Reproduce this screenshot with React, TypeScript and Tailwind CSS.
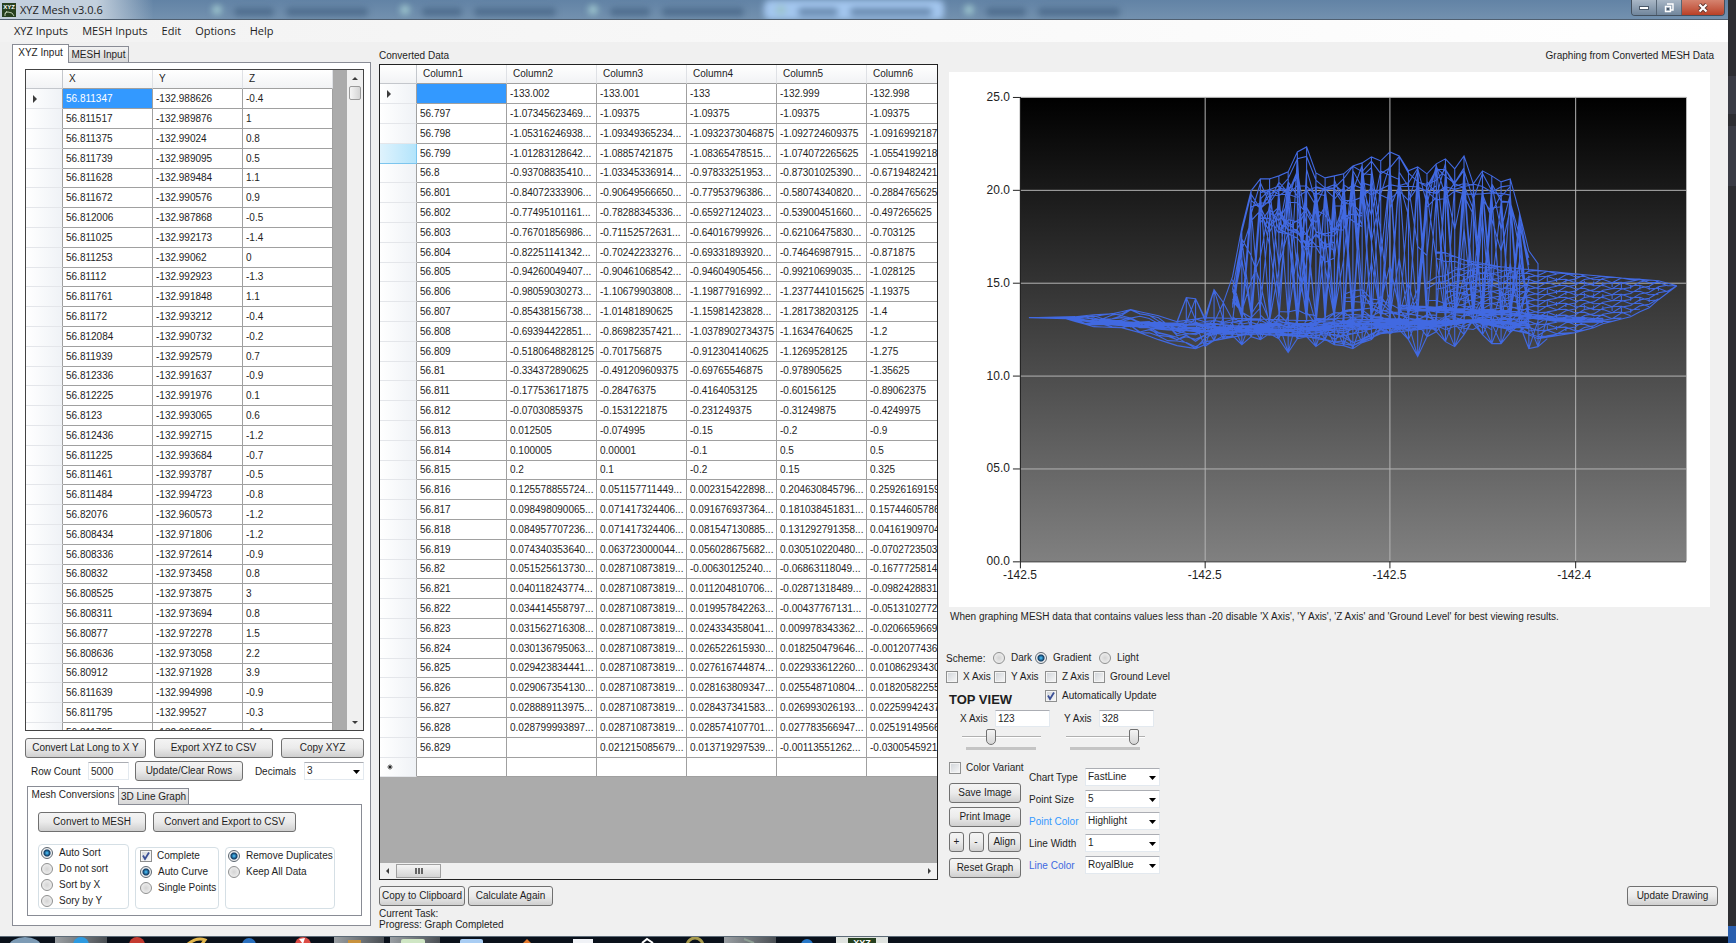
import React, { useState } from 'react';

const XYZ_ROWS = `56.811347 -132.988626 -0.4
56.811517 -132.989876 1
56.811375 -132.99024 0.8
56.811739 -132.989095 0.5
56.811628 -132.989484 1.1
56.811672 -132.990576 0.9
56.812006 -132.987868 -0.5
56.811025 -132.992173 -1.4
56.811253 -132.99062 0
56.81112 -132.992923 -1.3
56.811761 -132.991848 1.1
56.81172 -132.993212 -0.4
56.812084 -132.990732 -0.2
56.811939 -132.992579 0.7
56.812336 -132.991637 -0.9
56.812225 -132.991976 0.1
56.8123 -132.993065 0.6
56.812436 -132.992715 -1.2
56.811225 -132.993684 -0.7
56.811461 -132.993787 -0.5
56.811484 -132.994723 -0.8
56.82076 -132.960573 -1.2
56.808434 -132.971806 -1.2
56.808336 -132.972614 -0.9
56.80832 -132.973458 0.8
56.808525 -132.973875 3
56.808311 -132.973694 0.8
56.80877 -132.972278 1.5
56.808636 -132.973058 2.2
56.80912 -132.971928 3.9
56.811639 -132.994998 -0.9
56.811795 -132.99527 -0.3
56.811795 -132.995265 -0.4`.split('\n').map(line => line.split(' '));

const MESH_ROWS = `|-133.002|-133.001|-133|-132.999|-132.998
56.797|-1.07345623469...|-1.09375|-1.09375|-1.09375|-1.09375
56.798|-1.05316246938...|-1.09349365234...|-1.0932373046875|-1.092724609375|-1.09169921875
56.799|-1.01283128642...|-1.08857421875|-1.08365478515...|-1.074072265625|-1.05541992187
56.8|-0.93708835410...|-1.03345336914...|-0.97833251953...|-0.87301025390...|-0.67194824218
56.801|-0.84072333906...|-0.90649566650...|-0.77953796386...|-0.58074340820...|-0.2884765625
56.802|-0.77495101161...|-0.78288345336...|-0.65927124023...|-0.53900451660...|-0.497265625
56.803|-0.76701856986...|-0.71152572631...|-0.64016799926...|-0.62106475830...|-0.703125
56.804|-0.82251141342...|-0.70242233276...|-0.69331893920...|-0.74646987915...|-0.871875
56.805|-0.94260049407...|-0.90461068542...|-0.94604905456...|-0.99210699035...|-1.028125
56.806|-0.98059030273...|-1.10679903808...|-1.19877916992...|-1.2377441015625|-1.19375
56.807|-0.85438156738...|-1.01481890625|-1.15981423828...|-1.281738203125|-1.4
56.808|-0.69394422851...|-0.86982357421...|-1.0378902734375|-1.16347640625|-1.2
56.809|-0.5180648828125|-0.701756875|-0.912304140625|-1.1269528125|-1.275
56.81|-0.334372890625|-0.491209609375|-0.69765546875|-0.978905625|-1.35625
56.811|-0.177536171875|-0.28476375|-0.4164053125|-0.60156125|-0.89062375
56.812|-0.07030859375|-0.1531221875|-0.231249375|-0.31249875|-0.4249975
56.813|0.012505|-0.074995|-0.15|-0.2|-0.9
56.814|0.100005|0.00001|-0.1|0.5|0.5
56.815|0.2|0.1|-0.2|0.15|0.325
56.816|0.125578855724...|0.051157711449...|0.002315422898...|0.204630845796...|0.25926169159
56.817|0.098498090065...|0.071417324406...|0.091676937364...|0.181038451831...|0.15744605786
56.818|0.084957707236...|0.071417324406...|0.081547130885...|0.131292791358...|0.04161909704
56.819|0.074340353640...|0.063723000044...|0.056028675682...|0.030510220480...|-0.07027235039
56.82|0.051525613730...|0.028710873819...|-0.00630125240...|-0.06863118049...|-0.16777258146
56.821|0.040118243774...|0.028710873819...|0.011204810706...|-0.02871318489...|-0.09824288318
56.822|0.034414558797...|0.028710873819...|0.019957842263...|-0.00437767131...|-0.05131027724
56.823|0.031562716308...|0.028710873819...|0.024334358041...|0.009978343362...|-0.02066596694
56.824|0.030136795063...|0.028710873819...|0.026522615930...|0.018250479646...|-0.00120774364
56.825|0.029423834441...|0.028710873819...|0.027616744874...|0.022933612260...|0.01086293430
56.826|0.029067354130...|0.028710873819...|0.028163809347...|0.025548710804...|0.01820582255
56.827|0.028889113975...|0.028710873819...|0.028437341583...|0.026993026193...|0.02259942437
56.828|0.028799993897...|0.028710873819...|0.028574107701...|0.027783566947...|0.02519149566
56.829||0.021215085679...|0.013719297539...|-0.00113551262...|-0.03005459219
|||||`.split('\n').map(line => line.split('|'));

/* ---------- shared controls ---------- */

const Button: React.FC<{ className?: string; children: React.ReactNode }> = ({ className = '', children }) => (
  <button
    className={`h-5 rounded-[3px] border border-[#707070] bg-linear-to-b from-[#f4f4f4] from-0% via-[#ebebeb] via-50% to-[#cfcfcf] whitespace-nowrap leading-4 ${className}`}
  >
    {children}
  </button>
);

const Radio: React.FC<{ name: string; label: string; checked?: boolean; className?: string }> = ({
  name,
  label,
  checked,
  className = '',
}) => (
  <label className={`flex items-center gap-1.5 leading-4 whitespace-nowrap ${className}`}>
    <input
      type="radio"
      name={name}
      defaultChecked={checked}
      className="size-3 shrink-0 appearance-none rounded-full border border-[#8e8f8f] bg-radial from-[#d4d4d4] to-[#f6f6f6] checked:border-[#5c6670] checked:from-[#3fa9e0] checked:from-10% checked:via-[#123f66] checked:via-42% checked:to-[#f0f0f0] checked:to-58%"
    />
    {label}
  </label>
);

const Check: React.FC<{ label: string; checked?: boolean; className?: string }> = ({ label, checked, className = '' }) => (
  <label className={`flex items-center gap-[5px] leading-4 whitespace-nowrap ${className}`}>
    <span className="relative size-3 shrink-0">
      <input
        type="checkbox"
        defaultChecked={checked}
        className="peer block size-3 appearance-none border border-[#8e8f8f] bg-linear-to-br from-[#cfd3d8] to-[#f8f8f8] shadow-[inset_0_0_0_1px_#f4f4f4]"
      />
      <svg viewBox="0 0 12 12" className="pointer-events-none absolute inset-0 hidden size-3 peer-checked:block">
        <path d="M3 5.5 L5 9 L9 2.5" fill="none" stroke="#3a4f96" strokeWidth="1.8" />
      </svg>
    </span>
    {label}
  </label>
);

const Select: React.FC<{ id: string; options: string[]; value: string; className?: string }> = ({
  id,
  options,
  value,
  className = '',
}) => (
  <span className={`relative block ${className}`}>
    <select
      id={id}
      defaultValue={value}
      className="block h-[18px] w-full appearance-none border border-[#e3e9ef] border-t-[#abadb3] bg-white pl-0.5 leading-4"
    >
      {options.map(o => (
        <option key={o}>{o}</option>
      ))}
    </select>
    <svg viewBox="0 0 7 4" className="pointer-events-none absolute top-2 right-1 h-1 w-[7px]">
      <path d="M0 0H7L3.5 4Z" fill="#000" />
    </svg>
  </span>
);

const Tab: React.FC<{ active?: boolean; className?: string; children: React.ReactNode }> = ({
  active,
  className = '',
  children,
}) => (
  <button
    role="tab"
    aria-selected={!!active}
    className={`leading-4 whitespace-nowrap ${
      active
        ? 'z-10 -mb-px h-[19px] border border-b-0 border-[#898c95] bg-white pb-0.5'
        : 'h-4 border border-l-0 border-b-0 border-[#898c95] bg-linear-to-b from-[#f2f2f2] to-[#d8d8d8]'
    } ${className}`}
  >
    {children}
  </button>
);

const Arrow: React.FC<{ d: string }> = ({ d }) => (
  <svg viewBox="0 0 8 8" className="size-2 shrink-0" fill="#3c3c3c">
    <path d={d} />
  </svg>
);

/* ---------- data grid ---------- */

interface GridProps {
  columns: string[];
  rows: string[][];
  className: string;
  hot?: number;
  star?: boolean;
}

const DataGrid: React.FC<GridProps> = ({ columns, rows, className, hot, star }) => (
  <table className={`table-fixed border-separate border-spacing-0 bg-white ${className}`}>
    <colgroup>
      <col className="w-[37px]" />
      {columns.map(c => (
        <col key={c} className="w-[90px]" />
      ))}
    </colgroup>
    <thead>
      <tr className="h-[19px] bg-linear-to-b from-white to-[#f1f2f4]">
        <th className="border-r border-b border-[#c4c7cc] p-0" aria-label="Row" />
        {columns.map(c => (
          <th key={c} className="border-r border-b border-r-[#dfe1e5] border-b-[#a0a0a0] p-0 pl-1.5 text-left leading-4 font-normal">
            {c}
          </th>
        ))}
      </tr>
    </thead>
    <tbody>
      {rows.map((row, r) => (
        <tr key={r} className="h-5 nth-[5n]:h-[19px]">
          <th
            className={`border-r border-b p-0 pl-1.5 text-left font-normal ${
              r === hot
                ? 'border-[#7cc5ee] bg-linear-to-r from-[#dff3fd] to-[#b3e4fb]'
                : 'border-r-[#a0a0a0] border-b-[#e4e6ea] bg-linear-to-r from-white to-[#eff2f6]'
            }`}
          >
            {r === 0 && <Arrow d="M1 0V8L5 4Z" />}
            {star && r === rows.length - 1 && (
              <svg viewBox="0 0 8 8" className="size-2" stroke="#222">
                <path d="M4 1.5V6.5M1.5 4H6.5M2.5 2.5L5.5 5.5M5.5 2.5L2.5 5.5" />
              </svg>
            )}
          </th>
          {row.map((cell, c) => (
            <td
              key={c}
              className={`overflow-hidden border-r border-b border-[#a0a0a0] p-0 pl-[3px] leading-4 whitespace-nowrap ${
                r === 0 && c === 0 ? 'bg-[#3399ff] text-white' : ''
              }`}
            >
              {cell}
            </td>
          ))}
        </tr>
      ))}
    </tbody>
  </table>
);

/* ---------- chart ---------- */

const STEP = 9.27;
const colX = (k: number) => 80 + k * STEP;

type Knot = [number, number];

const lerpKnots = (knots: Knot[], k: number) => {
  if (k <= knots[0][0]) return knots[0][1];
  for (let i = 1; i < knots.length; i++) {
    const [k1, y1] = knots[i];
    const [k0, y0] = knots[i - 1];
    if (k <= k1) return y0 + ((y1 - y0) * (k - k0)) / (k1 - k0);
  }
  return knots[knots.length - 1][1];
};

// highest point of the surface in each column, from column 16 on
const CREST = [
  250, 226, 227, 246, 218, 231, 205, 156, 119, 107, 107, 104, 100, 80, 75, 101, 106, 104, 102, 94, 91, 85, 89, 80, 84,
  99, 95, 102, 92, 87, 97, 84, 112, 99, 104, 110, 107, 141, 179, 192,
];
// lowest point, from column 19 on
const TROUGH = [
  275, 269, 267, 264, 273, 265, 268, 262, 267, 281, 267, 265, 275, 268, 273, 274, 277, 271, 268, 258, 262, 258, 268,
  285, 265, 260, 270, 275, 263, 248, 263, 272, 272, 261, 253, 277, 275, 267,
];
const BASE_TOP: Knot[] = [[0, 246], [5, 245], [7, 243], [9, 242], [11, 238], [14, 244], [16, 250], [19, 246], [24, 247], [30, 249], [36, 245], [44, 250], [48, 248], [54, 247]];
const BASE_BOTTOM: Knot[] = [[0, 246], [4, 247], [7, 255], [10, 256], [12, 261], [14, 268], [16, 274], [18, 277], [20, 269], [24, 262], [30, 265], [35, 274], [38, 262], [42, 258], [48, 250], [54, 262]];
const BAND: Knot[] = [[4, 247], [8, 251], [16, 255], [22, 258], [28, 259], [33, 254], [38, 252], [44, 253]];
const UPPER_BAND: Knot[] = [[34, 220], [36, 216], [38, 226], [40, 233], [46, 236], [52, 239], [57, 245], [62, 246]];
const LENS_TOP: Knot[] = [[43, 179], [45, 181], [48, 192], [52, 196], [60, 203], [65, 207], [68, 209], [70, 214]];
const LENS_BOTTOM: Knot[] = [[43, 240], [50, 247], [55, 267], [57, 264], [59, 261], [61, 256], [62, 252], [65, 245], [66, 240], [67, 236], [68, 228], [70, 214]];

const buildMesh = () => {
  let seed = 20117;
  const rnd = () => {
    seed = (seed * 16807) % 2147483647;
    return seed / 2147483647;
  };
  const parts: string[] = [];
  const line = (pts: Knot[]) => {
    if (pts.length > 1) parts.push('M' + pts.map(([x, y]) => `${x.toFixed(1)} ${y.toFixed(1)}`).join('L'));
  };
  const run = (from: number, to: number, y: (k: number) => number) => {
    const pts: Knot[] = [];
    for (let k = from; k <= to; k++) pts.push([colX(k), y(k)]);
    line(pts);
  };
  const crest = (k: number) => CREST[k - 16];
  const trough = (k: number) => TROUGH[k - 19];

  // flat seabed sheet
  for (let n = 0; n <= 11; n++) {
    run(0, 54, k => {
      const t = Math.min(1, Math.max(0, n / 11 + (n % 11 ? (rnd() - 0.5) * 0.35 : 0)));
      return lerpKnots(BASE_TOP, k) * (1 - t) + lerpKnots(BASE_BOTTOM, k) * t;
    });
  }
  for (let n = 0; n < 11; n++) {
    run(4, 44, k => lerpKnots(BAND, k) + ((n - 5) * 0.9 + (rnd() - 0.5) * 2) * Math.min(1, (k - 4) / 14));
  }
  for (let n = 0; n < 5; n++) {
    run(40, 62, k => lerpKnots(UPPER_BAND, k) + n * 1.1 + rnd());
  }
  for (let n = 0; n < 7; n++) {
    run(34, 50, k => lerpKnots(UPPER_BAND, k) + (lerpKnots(BASE_TOP, k) + 6 - lerpKnots(UPPER_BAND, k)) * (n / 7) + rnd() * 7);
  }

  // outer silhouette
  run(16, 55, crest);
  run(19, 56, trough);
  for (let k = 19; k <= 55; k++) {
    line([[colX(k), trough(k)], [colX(k), 252]]);
    line([[colX(k), trough(k)], [colX(k + 1), 250 - rnd() * 6]]);
    line([[colX(k), trough(k)], [colX(k - 1), 252]]);
  }
  [17, 18, 20, 21].forEach(k => {
    line([[colX(k), crest(k)], [colX(k), 252]]);
    line([[colX(k), crest(k)], [colX(k - 1), 251]]);
    line([[colX(k), crest(k)], [colX(k + 1), 248]]);
  });

  // rim along the top of the plateau
  for (let n = 0; n < 2; n++) {
    run(25, 52, k => Math.max(crest(k), 117 + n * 5 + (rnd() - 0.5) * 14));
  }
  run(25, 52, k => crest(k) + rnd() * 16);

  // steep walls between plateau and seabed
  for (let n = 0; n < 12; n++) {
    run(22, 54, k => {
      const top = crest(k);
      const pick = rnd();
      if (pick < 0.38) return top + rnd() * 34;
      if (pick < 0.62) return top + rnd() * (240 - top);
      return 236 + rnd() * 18;
    });
  }
  for (let k = 23; k <= 53; k++) {
    line([[colX(k), crest(k)], [colX(k), 250]]);
    if (rnd() < 0.7) line([[colX(k), crest(k) + 14], [colX(k - 1), 250]]);
  }
  // tangle left of centre
  for (let n = 0; n < 4; n++) {
    run(27, 33, k => 158 + (k - 27) * 4 + (rnd() - 0.5) * 26);
    run(25, 36, k => 130 + rnd() * 34);
  }
  line([[colX(53), crest(53)], [colX(54), crest(54)], [colX(55), crest(55)], [colX(55), 272]]);

  // right hand lens: two families of lines crossing each other
  run(44, 70, k => lerpKnots(LENS_TOP, k));
  run(54, 70, k => lerpKnots(LENS_BOTTOM, k));
  [1.5, -3.6].forEach(slope => {
    for (let start = 90; start < 400; start += 6) {
      const from = 43 + Math.floor(rnd() * 6);
      const pts: Knot[] = [];
      for (let k = from; k <= 70; k++) {
        const y = start + slope * (k - 43);
        const top = lerpKnots(LENS_TOP, k);
        const bottom = lerpKnots(LENS_BOTTOM, k);
        if (y < top - 3 || y > bottom + 3) continue;
        pts.push([colX(k), Math.min(bottom, Math.max(top, y + (k % 2 ? 1 : -1)))]);
      }
      line(pts);
    }
  });
  for (let k = 47; k <= 68; k++) {
    for (let y = lerpKnots(LENS_TOP, k) + 6; y < lerpKnots(LENS_BOTTOM, k) - 4; y += 12) {
      line([[colX(k), y], [colX(k), y + 4]]);
    }
  }
  return parts.join('');
};

const MESH_PATH = buildMesh();

const Chart: React.FC = () => (
  <svg viewBox="0 0 762 536" className="block w-full bg-white" role="img" aria-label="Mesh chart">
    <defs>
      <linearGradient id="plot" x1="0" y1="0" x2="0" y2="1">
        <stop offset="0" stopColor="#000" />
        <stop offset="1" stopColor="#808080" />
      </linearGradient>
    </defs>
    <rect x="71" y="25" width="667" height="465" fill="url(#plot)" />
    <g stroke="#b4b4b4" strokeWidth="1">
      {[25, 118, 211, 304, 397].map(y => (
        <path key={y} d={`M71 ${y + 0.5}H738`} />
      ))}
      {[256, 441, 627, 738].map(x => (
        <path key={x} d={`M${x + 0.5} 25V490`} />
      ))}
    </g>
    <path d={MESH_PATH} fill="none" stroke="#4169e1" strokeWidth="1.1" />
    <g stroke="#222" strokeWidth="1">
      <path d="M71.5 25V490.5H738" fill="none" />
      {[25, 118, 211, 304, 397, 490].map(y => (
        <path key={y} d={`M64 ${y + 0.5}H71`} />
      ))}
      {[71, 256, 441, 627].map(x => (
        <path key={x} d={`M${x + 0.5} 490V497`} />
      ))}
    </g>
    <g fill="#222" fontSize="12">
      {['25.0', '20.0', '15.0', '10.0', '05.0', '00.0'].map((t, i) => (
        <text key={t} x="61" y={29 + i * 93} textAnchor="end">
          {t}
        </text>
      ))}
      {['-142.5', '-142.5', '-142.5', '-142.4'].map((t, i) => (
        <text key={i} x={71 + i * 185} y="508" textAnchor="middle">
          {t}
        </text>
      ))}
    </g>
  </svg>
);

/* ---------- window chrome ---------- */

const TitleBar: React.FC = () => (
  <header className="relative flex h-5 shrink-0 items-center overflow-hidden border-b border-[#4f5f70] bg-linear-to-b from-[#6283a5] to-[#7391af]">
    <div className="pointer-events-none absolute inset-0 flex items-center">
      <div className="h-5 w-48 shrink-0 bg-linear-to-r from-[#c3d0dd] from-50% to-transparent to-80%" />
      {[0, 1, 2, 3, 4].map(i => (
        <div
          key={i}
          className={`ml-2 flex h-5 w-[180px] shrink-0 items-center gap-3 rounded-md px-3 blur-[3px] ${i === 3 ? 'bg-[#a3c6ee]' : ''}`}
        >
          <span className="size-2.5 rounded-full bg-[#9cc4cd]" />
          <span className="mt-1 h-2 w-10 rounded bg-[#2f4d70]/50" />
          <span className="mt-1 h-2 flex-1 rounded bg-[#2f4d70]/50" />
        </div>
      ))}
    </div>
    <svg viewBox="0 0 14 14" className="relative ml-0.5 size-3.5" aria-hidden="true">
      <rect width="14" height="14" fill="#26401f" />
      <text x="7" y="6" fontSize="6" fontWeight="bold" textAnchor="middle" fill="#fff">
        XYZ
      </text>
      <path d="M3 13V11Q3 9 6 9L10 10L12 13M5 8L3 11" fill="none" stroke="#b7c9ae" />
    </svg>
    <h1 className="relative ml-1 font-['Open_Sans',sans-serif] text-[11px] leading-4">XYZ Mesh v3.0.6</h1>
    <div className="relative mr-[3px] ml-auto flex h-4 self-start overflow-hidden rounded-b border border-t-0 border-[#43505e]">
      <button aria-label="Minimize" className="flex w-[25px] items-center justify-center border-r border-[#566575] bg-linear-to-b from-[#a9b7c6] to-[#71869c]">
        <svg viewBox="0 0 10 4" className="h-1 w-2.5">
          <rect x=".5" y=".5" width="9" height="3" fill="#fff" stroke="#4a5868" />
        </svg>
      </button>
      <button aria-label="Restore" className="flex w-[25px] items-center justify-center border-r border-[#566575] bg-linear-to-b from-[#a9b7c6] to-[#71869c]">
        <svg viewBox="0 0 10 10" className="size-2.5" fill="none">
          <path d="M3 1H9V7H7M1.5 3.5H6.5V8.5H1.5Z" stroke="#fff" strokeWidth="1.4" />
          <rect x="3" y="5" width="2" height="2" fill="#4a5868" />
        </svg>
      </button>
      <button aria-label="Close" className="flex w-[42px] items-center justify-center bg-linear-to-b from-[#d5836f] to-[#b93f26]">
        <svg viewBox="0 0 10 10" className="size-2.5">
          <path d="M1.5 1.5L8.5 8.5M8.5 1.5L1.5 8.5" stroke="#5f3730" strokeWidth="4" />
          <path d="M1.5 1.5L8.5 8.5M8.5 1.5L1.5 8.5" stroke="#fff" strokeWidth="2.2" />
        </svg>
      </button>
    </div>
  </header>
);

const Taskbar: React.FC = () => (
  <footer className="h-[7px] shrink-0 overflow-hidden border-t border-[#5d6b78] bg-[#0a111b]">
    <svg width="930" height="7" viewBox="0 0 930 7" aria-hidden="true">
      <defs>
        <linearGradient id="task" x1="0" x2="1">
          <stop offset="0" stopColor="#9a9fa3" />
          <stop offset="1" stopColor="#4a4f54" />
        </linearGradient>
      </defs>
      <g fill="url(#task)">
        <rect x="55" width="52" height="7" />
        <rect x="334" width="50" height="7" />
        <rect x="390" width="50" height="7" />
        <rect x="724" width="52" height="7" />
        <rect x="836" width="52" height="7" fill="#dfe3df" />
      </g>
      <ellipse cx="25" cy="9" rx="16" ry="9" fill="#7d9bb5" />
      <circle cx="81" cy="8" r="8" fill="#2d9ae0" />
      <circle cx="137" cy="8" r="8" fill="#c43a30" />
      <path d="M188 7Q197 0 205 3L202 7" fill="none" stroke="#e2b64c" strokeWidth="3" />
      <circle cx="249" cy="8" r="7" fill="#2a6fbd" />
      <circle cx="303" cy="8" r="8" fill="#dc4b45" />
      <path d="M299 2L305 1L303 7" fill="#fff" />
      <rect x="348" y="3" width="13" height="5" fill="#c8923d" />
      <rect x="401" y="2" width="24" height="6" rx="2" fill="#cfe6c4" />
      <rect x="460" y="2" width="23" height="6" rx="2" fill="#a9cdf3" />
      <path d="M522 7L527 2L532 7" fill="#e2782c" />
      <rect x="573" y="2" width="20" height="6" fill="#f0f2f6" />
      <path d="M642 6L647 2L653 6" fill="none" stroke="#fff" strokeWidth="2" />
      <circle cx="695" cy="9" r="8" fill="none" stroke="#a79a4d" strokeWidth="3" />
      <path d="M744 2L754 6" stroke="#8fa096" strokeWidth="2" />
      <circle cx="807" cy="8" r="6" fill="#2878c8" />
      <rect x="848" y="1" width="28" height="6" fill="#26401f" />
      <text x="862" y="9" fontSize="9" fontWeight="bold" textAnchor="middle" fill="#fff">
        XYZ
      </text>
    </svg>
  </footer>
);

/* ---------- panels ---------- */

const InputPanel: React.FC = () => (
  <section className="flex min-h-0 flex-col pt-0.5 pb-2.5">
    <div role="tablist" className="flex h-[18px] shrink-0 items-end">
      <Tab active className="w-[57px]">
        XYZ Input
      </Tab>
      <Tab className="w-[60px]">MESH Input</Tab>
    </div>
    <div className="flex min-h-0 flex-1 flex-col border border-[#898c95] bg-white pt-1.5 pr-1.5 pb-[9px] pl-3">
      <div className="flex min-h-0 flex-1 overflow-hidden border border-[#444] bg-[#ababab]">
        <div className="min-w-0 flex-1 overflow-hidden">
          <DataGrid columns={['X', 'Y', 'Z']} rows={XYZ_ROWS} className="w-[307px]" />
        </div>
        <div className="flex w-4 flex-col items-center justify-between bg-[#f0f0f0] py-1">
          <div className="flex flex-col items-center gap-1">
            <Arrow d="M1 6H7L4 3Z" />
            <div className="h-3.5 w-3 rounded-xs border border-[#9a9a9a] bg-linear-to-r from-[#f5f5f5] to-[#d4d4d4]" />
          </div>
          <Arrow d="M1 3H7L4 6Z" />
        </div>
      </div>
      <div className="mt-[7px] flex justify-between">
        <Button className="w-[121px]">Convert Lat Long to X Y</Button>
        <Button className="w-[119px]">Export XYZ to CSV</Button>
        <Button className="w-[83px]">Copy XYZ</Button>
      </div>
      <div className="mt-[3px] flex items-center pl-1.5">
        <label htmlFor="rows" className="w-[57px] whitespace-nowrap">
          Row Count
        </label>
        <input id="rows" defaultValue="5000" className="h-[18px] w-[41px] border border-[#e3e9ef] border-t-[#abadb3] bg-white pl-0.5" />
        <Button className="ml-1.5 w-[108px]">Update/Clear Rows</Button>
        <label htmlFor="decimals" className="mr-2 ml-auto">
          Decimals
        </label>
        <Select id="decimals" options={['1', '2', '3', '4']} value="3" className="w-[60px]" />
      </div>
      <div className="mt-[5px] mr-0.5 ml-0.5 flex flex-col">
        <div role="tablist" className="flex h-[18px] items-end">
          <Tab active className="w-[92px]">
            Mesh Conversions
          </Tab>
          <Tab className="w-[70px]">3D Line Graph</Tab>
        </div>
        <div className="border border-[#898c95] px-2.5 pt-[7px] pb-1.5">
          <div className="flex gap-[7px]">
            <Button className="w-[108px]">Convert to MESH</Button>
            <Button className="w-[143px]">Convert and Export to CSV</Button>
          </div>
          <div className="mt-3 flex items-end gap-1.5">
            <fieldset className="h-[65px] w-[91px] rounded-sm border border-[#d5dfe5] pl-0.5">
              {['Auto Sort', 'Do not sort', 'Sort by X', 'Sory by Y'].map((t, i) => (
                <Radio key={t} name="sort" label={t} checked={i === 0} />
              ))}
            </fieldset>
            <fieldset className="h-[62px] w-[84px] rounded-sm border border-[#d5dfe5] pl-1">
              <Check label="Complete" checked />
              <Radio name="curve" label="Auto Curve" checked />
              <Radio name="curve" label="Single Points" />
            </fieldset>
            <fieldset className="h-[62px] w-[110px] rounded-sm border border-[#d5dfe5] pl-0.5">
              <Radio name="dupes" label="Remove Duplicates" checked />
              <Radio name="dupes" label="Keep All Data" />
            </fieldset>
          </div>
        </div>
      </div>
    </div>
  </section>
);

const ConvertedPanel: React.FC = () => (
  <section className="flex min-h-0 flex-1 flex-col pt-1.5 pb-1.5">
    <h2 className="leading-4">Converted Data</h2>
    <div className="flex min-h-0 flex-1 flex-col overflow-hidden border border-[#222] bg-[#ababab]">
      <div className="min-h-0 flex-1 overflow-hidden">
        <DataGrid
          columns={['Column1', 'Column2', 'Column3', 'Column4', 'Column5', 'Column6']}
          rows={MESH_ROWS}
          className="w-[577px]"
          hot={3}
          star
        />
      </div>
      <div className="flex h-4 shrink-0 items-center bg-[#f0f0f0] px-1">
        <Arrow d="M5 1V7L2 4Z" />
        <div className="ml-1 flex h-3.5 w-[45px] items-center justify-center gap-px border border-[#a0a0a0] bg-linear-to-b from-[#f5f5f5] to-[#d4d4d4]">
          <span className="h-1.5 w-0.5 bg-[#666]" />
          <span className="h-1.5 w-0.5 bg-[#666]" />
          <span className="h-1.5 w-0.5 bg-[#666]" />
        </div>
        <span className="flex-1" />
        <Arrow d="M3 1V7L6 4Z" />
      </div>
    </div>
    <div className="mt-1.5 flex gap-[3px]">
      <Button className="w-[86px]">Copy to Clipboard</Button>
      <Button className="w-[85px]">Calculate Again</Button>
    </div>
    <p className="mt-0.5 leading-[11px]">Current Task:</p>
    <p className="leading-[11px]">Progress: Graph Completed</p>
  </section>
);

const AxisControl: React.FC<{ label: string; initial: number }> = ({ label, initial }) => {
  const [value, setValue] = useState(initial);
  return (
    <div className="w-[90px]">
      <label className="flex items-center justify-between whitespace-nowrap">
        {label}
        <input
          value={value}
          onChange={e => setValue(Number(e.target.value) || 0)}
          className="h-[17px] w-[55px] border border-[#e3e9ef] border-t-[#abadb3] bg-white pl-0.5"
        />
      </label>
      <input
        type="range"
        aria-label={label}
        min={0}
        max={360}
        value={value}
        onChange={e => setValue(Number(e.target.value))}
        className="mt-0.5 ml-0.5 block h-4 w-[79px] appearance-none bg-transparent [&::-webkit-slider-runnable-track]:h-0.5 [&::-webkit-slider-runnable-track]:border-t [&::-webkit-slider-runnable-track]:border-[#b0b0b0] [&::-webkit-slider-runnable-track]:bg-white [&::-webkit-slider-thumb]:-mt-2 [&::-webkit-slider-thumb]:h-4 [&::-webkit-slider-thumb]:w-2.5 [&::-webkit-slider-thumb]:appearance-none [&::-webkit-slider-thumb]:rounded-t-xs [&::-webkit-slider-thumb]:rounded-b-[5px] [&::-webkit-slider-thumb]:border [&::-webkit-slider-thumb]:border-[#707070] [&::-webkit-slider-thumb]:bg-linear-to-b [&::-webkit-slider-thumb]:from-[#f4f4f4] [&::-webkit-slider-thumb]:to-[#d6d6d6]"
      />
      <div className="mt-0.5 ml-1.5 h-[3px] w-[70px] bg-[#c4c4c4]" />
    </div>
  );
};

const STYLE_FIELDS = [
  { id: 'type', label: 'Chart Type', value: 'FastLine', color: '' },
  { id: 'size', label: 'Point Size', value: '5', color: '' },
  { id: 'pcolor', label: 'Point Color', value: 'Highlight', color: 'text-[#3399ff]' },
  { id: 'width', label: 'Line Width', value: '1', color: '' },
  { id: 'lcolor', label: 'Line Color', value: 'RoyalBlue', color: 'text-[#4169e1]' },
];

const GraphPanel: React.FC = () => (
  <section className="flex min-h-0 flex-1 flex-col pt-1.5 pr-2.5">
    <p className="pr-1 text-right leading-4">Graphing from Converted MESH Data</p>
    <div className="mt-2 pr-2">
      <Chart />
    </div>
    <p className="mt-0.5 pl-px leading-4">
      When graphing MESH data that contains values less than -20 disable 'X Axis', 'Y Axis', 'Z Axis' and 'Ground Level' for
      best viewing results.
    </p>
    <div className="-ml-[3px] pt-[25px]">
      <div className="flex h-4 items-center">
        <span className="w-[47px]">Scheme:</span>
        <Radio name="scheme" label="Dark" className="w-[42px]" />
        <Radio name="scheme" label="Gradient" checked className="w-16" />
        <Radio name="scheme" label="Light" />
      </div>
      <div className="mt-[3px] flex h-4 items-center">
        <Check label="X Axis" className="w-12" />
        <Check label="Y Axis" className="w-[51px]" />
        <Check label="Z Axis" className="w-12" />
        <Check label="Ground Level" />
      </div>
      <div className="mt-[3px] flex h-[22px] items-start">
        <strong className="mt-1 w-[99px] pl-[3px] text-[13px] leading-4">TOP VIEW</strong>
        <Check label="Automatically Update" checked />
      </div>
      <div className="flex gap-3.5 pl-3.5">
        <AxisControl label="X Axis" initial={123} />
        <AxisControl label="Y Axis" initial={328} />
      </div>
    </div>
    <div className="mt-2.5 flex gap-2">
      <div className="flex w-[72px] flex-col">
        <Check label="Color Variant" />
        <Button className="mt-[7px]">Save Image</Button>
        <Button className="mt-1">Print Image</Button>
        <div className="mt-[5px] flex justify-between">
          <Button className="w-[15px]">+</Button>
          <Button className="w-[15px]">-</Button>
          <Button className="w-[33px]">Align</Button>
        </div>
        <Button className="mt-1.5">Reset Graph</Button>
      </div>
      <div className="flex flex-col gap-1 pt-2">
        {STYLE_FIELDS.map(f => (
          <div key={f.id} className="flex items-center">
            <label htmlFor={f.id} className={`w-14 whitespace-nowrap ${f.color}`}>
              {f.label}
            </label>
            <Select id={f.id} options={[f.value]} value={f.value} className="w-[75px]" />
          </div>
        ))}
      </div>
    </div>
    <Button className="mt-auto mb-[30px] w-[91px] self-end">Update Drawing</Button>
  </section>
);

const App: React.FC = () => (
  <div className="flex h-screen overflow-hidden bg-[#2d2e32] font-['Liberation_Sans',sans-serif] text-[10px] text-[#1e1e1e]">
    <div className="flex min-w-0 flex-1 flex-col bg-[#f0f0f0]">
      <TitleBar />
      <nav className="flex h-[22px] shrink-0 items-center gap-3.5 bg-linear-to-r from-[#f2f2f2] to-white pl-3.5 font-['Open_Sans',sans-serif] text-[11px]">
        {['XYZ Inputs', 'MESH Inputs', 'Edit', 'Options', 'Help'].map(item => (
          <button key={item}>{item}</button>
        ))}
      </nav>
      <main className="grid min-h-0 flex-1 grid-cols-[359px_567px_minmax(0,1fr)] pl-3">
        <InputPanel />
        <div className="flex min-h-0 min-w-0 flex-col pl-2">
          <ConvertedPanel />
        </div>
        <div className="flex min-h-0 flex-col pl-[11px]">
          <GraphPanel />
        </div>
      </main>
      <Taskbar />
    </div>
    <div className="flex w-2 shrink-0 flex-col">
      <div className="mt-[76px] h-[38px] bg-[#3a3c45]" />
      <div className="mt-3 h-[60px] bg-[#3a3c45]" />
      <div className="mt-auto h-[17px] bg-[#2a5fae]" />
    </div>
  </div>
);

export default App;
